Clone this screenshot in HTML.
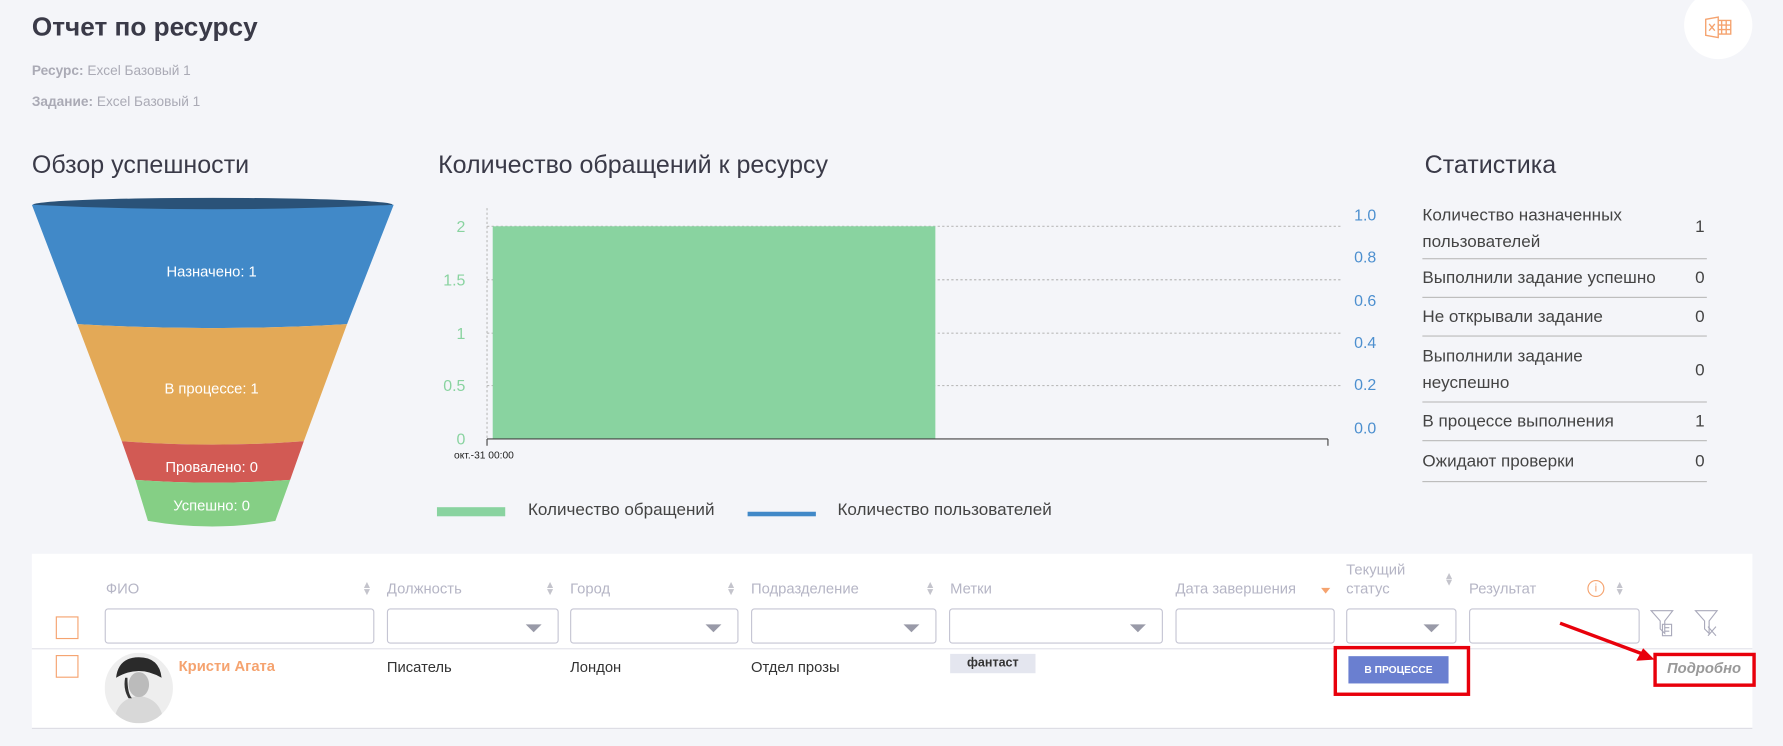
<!DOCTYPE html>
<html><head><meta charset="utf-8"><style>
*{margin:0;padding:0;box-sizing:border-box}
html,body{width:1783px;height:746px;overflow:hidden;background:#f4f5f9;font-family:"Liberation Sans","DejaVu Sans",sans-serif}
#w{position:absolute;left:0;top:0;width:1567px;height:656px;transform:scale(1.1379,1.1372);transform-origin:0 0;color:#333}
.a{position:absolute;white-space:nowrap}
.h2{font-size:22px;color:#3a3a48}
.st{position:absolute;left:1250px;width:250px;font-size:15px;color:#444;border-bottom:1px solid #bbb}
.st span{position:absolute;right:2px}
.hd{position:absolute;top:510px;font-size:13px;color:#b5b5c5}
.in{position:absolute;top:535px;height:31px;border:1px solid #c5c5d3;border-radius:3px;background:#fff}
.in.s::after{content:"";position:absolute;right:14px;top:13px;border-left:7px solid transparent;border-right:7px solid transparent;border-top:7px solid #999aa8}
.sr{position:absolute;top:511px;font-size:9px;color:#c4c4cc;line-height:6px}
.cell{position:absolute;top:579px;font-size:13px;color:#333}
</style></head><body><div id="w">
<div class="a" style="left:28px;top:10px;font-size:23px;font-weight:bold;color:#3a3a48">Отчет по ресурсу</div>
<div class="a" style="left:28px;top:55px;font-size:12px;color:#aaaab5"><b>Ресурс:</b> Excel Базовый 1</div>
<div class="a" style="left:28px;top:82px;font-size:12px;color:#aaaab5"><b>Задание:</b> Excel Базовый 1</div>
<div class="a" style="left:1480px;top:-8px;width:60px;height:60px;border-radius:50%;background:#fff"></div>
<svg class="a" style="left:1498px;top:14px" width="24" height="20" viewBox="0 0 24 20" fill="none" stroke="#f5a36f" stroke-width="1.2"><path d="M1 3L12 1V19L1 17Z"/><path d="M12 4H23V16H12M15 4V16M19 4V16M12 8H23M12 12H23"/><path d="M4 7L9 13M9 7L4 13"/></svg>
<div class="a h2" style="left:28px;top:132px">Обзор успешности</div>
<div class="a h2" style="left:385px;top:132px">Количество обращений к ресурсу</div>
<div class="a h2" style="left:1252px;top:132px">Статистика</div>
<svg class="a" style="left:28px;top:170px" width="318" height="298">
<ellipse cx="159" cy="10" rx="158" ry="6" fill="#2a5278"/>
<path d="M0 10Q159 18 318 10L277 115Q159 122 40 115Z" fill="#4189c8"/>
<path d="M40 115Q159 122 277 115L239 218Q159 224 79 218Z" fill="#e3a957"/>
<path d="M79 218Q159 224 239 218L227 252Q159 257 91 252Z" fill="#d25a54"/>
<path d="M91 252Q159 257 227 252L214 288Q159 298 102 288Z" fill="#85cf85"/>
<g fill="#fff" font-size="13" text-anchor="middle" font-family="Liberation Sans,sans-serif"><text x="158" y="73">Назначено: 1</text><text x="158" y="176">В процессе: 1</text><text x="158" y="245">Провалено: 0</text><text x="158" y="279">Успешно: 0</text></g>
</svg>
<svg class="a" style="left:385px;top:178px" width="840" height="235" font-family="Liberation Sans,sans-serif">
<g stroke="#bbb" stroke-dasharray="2 2"><line x1="43" y1="21" x2="795" y2="21"/><line x1="43" y1="68" x2="795" y2="68"/><line x1="43" y1="115" x2="795" y2="115"/><line x1="43" y1="161" x2="795" y2="161"/><line x1="43" y1="5" x2="43" y2="208"/></g>
<rect x="48" y="21" width="389" height="187" fill="#89d3a0"/>
<path d="M43 208H782M43 208V214M782 208V214" stroke="#444"/>
<g fill="#89d3a0" font-size="14" text-anchor="end"><text x="24" y="26">2</text><text x="24" y="73">1.5</text><text x="24" y="120">1</text><text x="24" y="166">0.5</text><text x="24" y="213">0</text></g>
<g fill="#4c8fcf" font-size="14"><text x="805" y="16">1.0</text><text x="805" y="53">0.8</text><text x="805" y="91">0.6</text><text x="805" y="128">0.4</text><text x="805" y="165">0.2</text><text x="805" y="203">0.0</text></g>
<text x="14" y="225" font-size="9" fill="#222">окт.-31 00:00</text>
</svg>
<div class="a" style="left:384px;top:446px;width:60px;height:8px;background:#89d3a0"></div>
<div class="a" style="left:464px;top:440px;font-size:15px;color:#444">Количество обращений</div>
<div class="a" style="left:657px;top:450px;width:60px;height:4px;background:#4189c8"></div>
<div class="a" style="left:736px;top:440px;font-size:15px;color:#444">Количество пользователей</div>
<div class="st" style="top:172px;height:56px;padding-top:6px;line-height:23px">Количество назначенных<br>пользователей<span style="top:16px">1</span></div>
<div class="st" style="top:228px;height:34px;padding-top:8px">Выполнили задание успешно<span style="top:8px">0</span></div>
<div class="st" style="top:262px;height:34px;padding-top:8px">Не открывали задание<span style="top:8px">0</span></div>
<div class="st" style="top:296px;height:58px;padding-top:6px;line-height:23px">Выполнили задание<br>неуспешно<span style="top:18px">0</span></div>
<div class="st" style="top:354px;height:34px;padding-top:8px">В процессе выполнения<span style="top:8px">1</span></div>
<div class="st" style="top:388px;height:36px;padding-top:9px">Ожидают проверки<span style="top:9px">0</span></div>
<div class="a" style="left:28px;top:487px;width:1512px;height:154px;background:#fff;border-bottom:1px solid #dcdce4"></div>
<div class="a" style="left:28px;top:570px;width:1512px;height:1px;background:#e2e2ea"></div>
<div class="hd" style="left:93px">ФИО</div><div class="sr" style="left:318px">▲<br>▼</div>
<div class="hd" style="left:340px">Должность</div><div class="sr" style="left:479px">▲<br>▼</div>
<div class="hd" style="left:501px">Город</div><div class="sr" style="left:638px">▲<br>▼</div>
<div class="hd" style="left:660px">Подразделение</div><div class="sr" style="left:813px">▲<br>▼</div>
<div class="hd" style="left:835px">Метки</div>
<div class="hd" style="left:1033px">Дата завершения</div><div class="a" style="left:1161px;top:517px;border-left:4px solid transparent;border-right:4px solid transparent;border-top:5px solid #f5a36f"></div>
<div class="hd" style="left:1183px;top:492px;line-height:17px">Текущий<br>статус</div><div class="sr" style="left:1269px;top:503px">▲<br>▼</div>
<div class="hd" style="left:1291px">Результат</div>
<div class="a" style="left:1395px;top:510px;width:15px;height:15px;border:1px solid #f5a36f;border-radius:50%;color:#f5a36f;font-size:10px;text-align:center;line-height:13px">i</div><div class="sr" style="left:1419px">▲<br>▼</div>
<div class="a" style="left:49px;top:542px;width:20px;height:20px;border:1px solid #f5a36f"></div>
<div class="in" style="left:92px;width:237px"></div>
<div class="in s" style="left:340px;width:151px"></div>
<div class="in s" style="left:501px;width:148px"></div>
<div class="in s" style="left:660px;width:163px"></div>
<div class="in s" style="left:834px;width:188px"></div>
<div class="in" style="left:1033px;width:140px"></div>
<div class="in s" style="left:1183px;width:97px"></div>
<div class="in" style="left:1291px;width:150px"></div>
<svg class="a" style="left:1450px;top:535px" width="70" height="26" fill="none" stroke="#aab" stroke-width="1"><path d="M1 2H20L13 11V22L9 18V11Z"/><rect x="11" y="14" width="8" height="10"/><path d="M13 17H17M13 20H17"/><path d="M40 2H59L52 11V22L48 18V11Z"/><path d="M51 16L58 24M58 16L51 24"/></svg>
<div class="a" style="left:49px;top:576px;width:20px;height:20px;border:1px solid #f5a36f"></div>
<svg class="a" style="left:92px;top:574px" width="60" height="62"><defs><clipPath id="c"><ellipse cx="30" cy="31" rx="30" ry="31"/></clipPath></defs><g clip-path="url(#c)"><rect width="60" height="62" fill="#eee"/><path d="M8 62Q10 40 30 38Q50 40 52 62Z" fill="#d8d8d8"/><ellipse cx="30" cy="28" rx="9" ry="11" fill="#bbb"/><path d="M10 22Q12 4 30 4Q48 4 50 22Q40 16 30 16Q20 16 10 22Z" fill="#2a2a2a"/><path d="M20 22Q20 36 24 40L21 40Q16 32 18 22Z" fill="#333"/></g></svg>
<div class="cell" style="left:157px;top:578px;color:#f5a36f;font-weight:bold">Кристи Агата</div>
<div class="cell" style="left:340px">Писатель</div>
<div class="cell" style="left:501px">Лондон</div>
<div class="cell" style="left:660px">Отдел прозы</div>
<div class="a" style="left:835px;top:575px;width:75px;height:17px;background:#e4e6ef;font-size:11px;font-weight:bold;text-align:center;line-height:17px;color:#333">фантаст</div>
<div class="a" style="left:1172px;top:568px;width:120px;height:44px;border:3px solid #e8000b"></div>
<div class="a" style="left:1185px;top:577px;width:88px;height:24px;background:#6a7fd0;color:#fff;font-size:9px;font-weight:bold;text-align:center;line-height:24px">В ПРОЦЕССЕ</div>
<div class="a" style="left:1453px;top:574px;width:90px;height:30px;border:3px solid #e8000b"></div>
<div class="a" style="left:1465px;top:580px;font-size:13px;font-style:italic;font-weight:bold;color:#999">Подробно</div>
<svg class="a" style="left:1368px;top:540px" width="90" height="50"><line x1="3" y1="8" x2="78" y2="36" stroke="#e8000b" stroke-width="3"/><path d="M86 40L70 41L76 30Z" fill="#e8000b"/></svg>
</div></body></html>
